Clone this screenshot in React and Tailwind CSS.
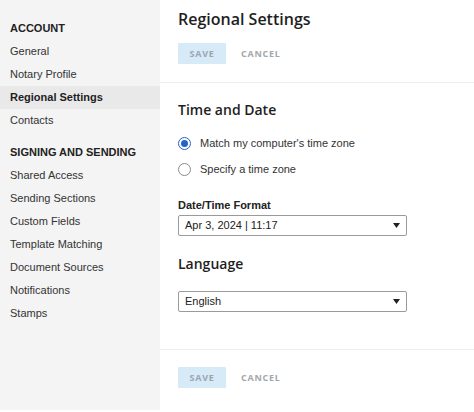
import React, { useState } from "react";

const accountItems = ["General", "Notary Profile", "Regional Settings", "Contacts"];
const signingItems = [
  "Shared Access",
  "Sending Sections",
  "Custom Fields",
  "Template Matching",
  "Document Sources",
  "Notifications",
  "Stamps",
];

const body = { fontFamily: '"Liberation Sans", Arial, sans-serif' };
const heading = { fontFamily: '"Open Sans", "Liberation Sans", sans-serif' };

function NavItem({ label, active }) {
  return (
    <div
      className={`h-[23px] flex items-center px-[10px] text-[11px] ${
        active ? "bg-[#e9e9e9] font-bold text-[#1e1e1e]" : "text-[#333]"
      }`}
    >
      {label}
    </div>
  );
}

function Actions() {
  return (
    <div className="flex items-center gap-[15px]" style={heading}>
      <button className="h-[21px] w-[48px] bg-[#d7eaf8] text-[#9ca6ae] text-[9px] font-bold tracking-[0.08em] rounded-[1px]">
        SAVE
      </button>
      <button className="h-[21px] text-[#a3a8ac] text-[9px] font-bold tracking-[0.08em]">
        CANCEL
      </button>
    </div>
  );
}

function Radio({ checked, label, onClick }) {
  return (
    <div className="h-[16px] flex items-center gap-[9px] cursor-pointer" onClick={onClick}>
      <span
        className={`w-[13px] h-[13px] rounded-full border flex items-center justify-center ${
          checked ? "border-[#2563c9]" : "border-[#8a8a8a]"
        }`}
      >
        {checked && <span className="w-[7px] h-[7px] rounded-full bg-[#2563c9]" />}
      </span>
      <span className="text-[11px] text-[#333]">{label}</span>
    </div>
  );
}

function FakeSelect({ value }) {
  return (
    <div className="w-[229px] h-[21px] border border-[#9a9a9a] rounded-[2px] flex items-center justify-between pl-[6px] pr-[6px] bg-white">
      <span className="text-[11px] text-[#222]">{value}</span>
      <svg width="7" height="5" viewBox="0 0 7 5">
        <path d="M0 0 L7 0 L3.5 5 Z" fill="#222" />
      </svg>
    </div>
  );
}

export default function App() {
  const [zone, setZone] = useState("match");

  return (
    <div className="flex w-[474px] h-[412px] bg-white overflow-hidden" style={body}>
      <aside className="w-[160px] h-[410px] bg-[#f4f4f4] pt-[17px] shrink-0">
        <div className="h-[23px] flex items-center px-[10px] text-[11px] font-bold text-[#222]">
          ACCOUNT
        </div>
        {accountItems.map((item) => (
          <NavItem key={item} label={item} active={item === "Regional Settings"} />
        ))}
        <div className="h-[9px]" />
        <div className="h-[23px] flex items-center px-[10px] text-[11px] font-bold text-[#222]">
          SIGNING AND SENDING
        </div>
        {signingItems.map((item) => (
          <NavItem key={item} label={item} />
        ))}
      </aside>

      <main className="flex-1 flex flex-col">
        <div className="pt-[9px] pb-[18px] px-[18px] border-b border-[#ececec]">
          <h1 className="text-[16px] leading-[20px] font-semibold text-[#1e1e1e]" style={heading}>
            Regional Settings
          </h1>
          <div className="mt-[14px]">
            <Actions />
          </div>
        </div>

        <div className="pt-[18px] pb-[37px] px-[18px] border-b border-[#ececec]">
          <h2 className="text-[14px] leading-[18px] font-semibold text-[#1e1e1e]" style={heading}>
            Time and Date
          </h2>
          <div className="mt-[16px] flex flex-col gap-[10px]">
            <Radio
              checked={zone === "match"}
              label="Match my computer's time zone"
              onClick={() => setZone("match")}
            />
            <Radio
              checked={zone === "specify"}
              label="Specify a time zone"
              onClick={() => setZone("specify")}
            />
          </div>
          <div className="mt-[21px] text-[11px] leading-[14px] font-bold text-[#222]">
            Date/Time Format
          </div>
          <div className="mt-[3px]">
            <FakeSelect value="Apr 3, 2024 | 11:17" />
          </div>
          <h2 className="mt-[19px] text-[14px] leading-[18px] font-semibold text-[#1e1e1e]" style={heading}>
            Language
          </h2>
          <div className="mt-[18px]">
            <FakeSelect value="English" />
          </div>
        </div>

        <div className="pt-[17px] px-[18px]">
          <Actions />
        </div>
      </main>
    </div>
  );
}
